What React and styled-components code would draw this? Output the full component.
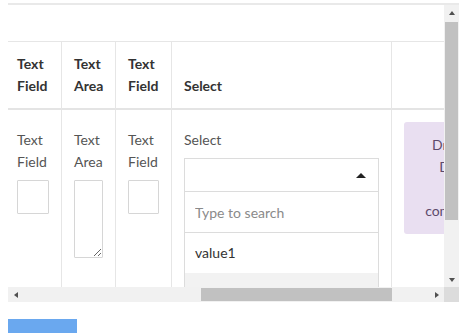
import React, { useLayoutEffect, useRef } from 'react';
import styled, { createGlobalStyle } from 'styled-components';

const HIDDEN = [120, 95, 93, 93];
const VISIBLE = [57, 54, 56, 220, 136];
const HIDDEN_WIDTH = HIDDEN.reduce((a, b) => a + b, 0);
const BAR = 15;
const VIEW_W = 436;
const VIEW_H = 282;
const SHEET_TOP = 36;
const HEAD_H = 1 + 68;
const BODY_H = 250;
const CONTENT_W = [...HIDDEN, ...VISIBLE].reduce((a, b) => a + b, 0);
const CONTENT_H = SHEET_TOP + HEAD_H + BODY_H;
const SCROLL_LEFT = HIDDEN_WIDTH + 3;

const V_TRACK = VIEW_H - 2 * BAR;
const H_TRACK = VIEW_W - 2 * BAR;
const V_THUMB = { start: 2, len: (V_TRACK * VIEW_H) / CONTENT_H - 2 };
const H_THUMB = { start: (H_TRACK * SCROLL_LEFT) / CONTENT_W, len: (H_TRACK * VIEW_W) / CONTENT_W };

const GlobalStyle = createGlobalStyle`
  html, body { margin: 0; padding: 0; background: #fff; }
  body {
    font-family: Lato, "Liberation Sans", sans-serif;
    font-size: 14px;
    line-height: 22px;
    color: #333;
  }
  * { box-sizing: border-box; }
`;

const Page = styled.div`
  padding: 3px 0 0 8px;
  width: 459px;
`;

const Frame = styled.div`
  display: grid;
  grid-template-columns: ${VIEW_W}px ${BAR}px;
  grid-template-rows: ${VIEW_H}px ${BAR}px;
  border-top: 2px solid #e9e9e9;
  background: #fff;
`;

const Viewport = styled.div`
  overflow: hidden;
  position: relative;
`;

const Sheet = styled.div`
  padding-top: ${SHEET_TOP}px;
  width: max-content;
`;

const Grid = styled.div`
  display: grid;
  grid-template-columns: ${[...HIDDEN, ...VISIBLE].map((w) => `${w}px`).join(' ')};
  border-top: 1px solid #e6e6e6;
`;

const HeadCell = styled.div`
  display: flex;
  align-items: flex-end;
  height: 68px;
  padding: 11px 12px;
  font-weight: 700;
  color: #333;
  border-bottom: 2px solid #e4e4e4;
  border-right: ${(p) => (p.$last ? 'none' : '1px solid #e6e6e6')};
`;

const BodyCell = styled.div`
  position: relative;
  height: ${BODY_H}px;
  padding: 12px;
  border-right: ${(p) => (p.$last ? 'none' : '1px solid #e6e6e6')};
`;

const FormGroup = styled.div`
  padding-top: 7px;
`;

const Label = styled.label`
  display: block;
  margin-bottom: 7px;
  color: #555;
  font-weight: 400;
`;

const Input = styled.input`
  display: block;
  width: 100%;
  height: 34px;
  border: 1px solid #d6d6d6;
  border-radius: 1px;
  background: #fff;
  padding: 4px;
  font: inherit;
`;

const TextArea = styled.textarea`
  display: block;
  width: 100%;
  height: 78px;
  border: 1px solid #d6d6d6;
  border-radius: 1px;
  background: #fff;
  resize: vertical;
  font: inherit;
  padding: 2px;
`;

const SelectWrap = styled.div`
  position: relative;
`;

const SelectControl = styled.div`
  position: relative;
  height: 34px;
  border: 1px solid #dcdcdc;
  background: #fff;

  &::after {
    content: '';
    position: absolute;
    right: 12px;
    top: 14px;
    border-style: solid;
    border-width: 0 5px 5px 5px;
    border-color: transparent transparent #222 transparent;
  }
`;

const Dropdown = styled.div`
  position: absolute;
  top: 100%;
  left: 0;
  right: 0;
  margin-top: -1px;
  border: 1px solid #dcdcdc;
  background: #fff;
  z-index: 2;
`;

const Search = styled.input`
  display: block;
  width: 100%;
  height: 41px;
  border: none;
  border-bottom: 1px solid #dcdcdc;
  padding: 10px;
  font: inherit;
  font-size: 14px;
  color: #333;
  outline: none;
  &::placeholder { color: #8a8a8a; }
`;

const Choice = styled.div`
  height: 40px;
  padding: 9px 10px;
  font-size: 14px;
  color: #333;
  background: ${(p) => (p.$highlighted ? '#f2f2f2' : '#fff')};
`;

const DropZone = styled.div`
  padding: 12px 20px;
  background: #e9dff1;
  color: #5c4a6b;
  text-align: center;
  border-radius: 3px;
`;

/* ---------- scrollbars ---------- */

const VBar = styled.div`
  display: flex;
  flex-direction: column;
  min-height: 0;
  background: #f1f1f1;
`;

const HBar = styled.div`
  display: flex;
  min-width: 0;
  background: #f1f1f1;
`;

const Corner = styled.div`
  background: #dcdcdc;
`;

const ArrowButton = styled.div`
  flex: 0 0 ${BAR}px;
  width: ${BAR}px;
  height: ${BAR}px;
  display: flex;
  align-items: center;
  justify-content: center;

  &::before {
    content: '';
    border-style: solid;
    ${(p) =>
      ({
        up: 'border-width: 0 3.5px 4px 3.5px; border-color: transparent transparent #505050 transparent;',
        down: 'border-width: 4px 3.5px 0 3.5px; border-color: #505050 transparent transparent transparent;',
        left: 'border-width: 3.5px 4px 3.5px 0; border-color: transparent #505050 transparent transparent;',
        right: 'border-width: 3.5px 0 3.5px 4px; border-color: transparent transparent transparent #505050;',
      })[p.$dir]}
  }
`;

const Track = styled.div`
  flex: 1 1 0;
  min-width: 0;
  min-height: 0;
  position: relative;
`;

const VThumb = styled.div`
  position: absolute;
  left: 1px;
  right: 1px;
  top: ${(p) => p.$start}px;
  height: ${(p) => p.$len}px;
  background: #c1c1c1;
`;

const HThumb = styled.div`
  position: absolute;
  top: 1px;
  bottom: 1px;
  left: ${(p) => p.$start}px;
  width: ${(p) => p.$len}px;
  background: #c1c1c1;
`;

const SubmitButton = styled.button`
  margin-top: 17px;
  padding: 8px 13px;
  border: none;
  border-radius: 0;
  background: #6aa8ef;
  color: #fff;
  font: inherit;
  font-size: 14px;
`;

const hiddenCols = [
  { head: 'Number', label: 'Number' },
  { head: 'Password', label: 'Password' },
  { head: 'Checkbox', label: 'Checkbox' },
  { head: 'Email', label: 'Email' },
];

export default function App() {
  const ref = useRef(null);

  useLayoutEffect(() => {
    const el = ref.current;
    if (!el) return;
    el.scrollLeft = SCROLL_LEFT;
    el.scrollTop = 0;
  }, []);

  return (
    <>
      <GlobalStyle />
      <Page>
        <Frame>
          <Viewport ref={ref}>
            <Sheet>
              <Grid>
                {hiddenCols.map((c) => (
                  <HeadCell key={c.head}>{c.head}</HeadCell>
                ))}
                <HeadCell>Text Field</HeadCell>
                <HeadCell>Text Area</HeadCell>
                <HeadCell>Text Field</HeadCell>
                <HeadCell>Select</HeadCell>
                <HeadCell $last />

                {hiddenCols.map((c) => (
                  <BodyCell key={c.head}>
                    <FormGroup>
                      <Label>{c.label}</Label>
                      <Input />
                    </FormGroup>
                  </BodyCell>
                ))}
                <BodyCell>
                  <FormGroup>
                    <Label>Text Field</Label>
                    <Input />
                  </FormGroup>
                </BodyCell>
                <BodyCell>
                  <FormGroup>
                    <Label>Text Area</Label>
                    <TextArea />
                  </FormGroup>
                </BodyCell>
                <BodyCell>
                  <FormGroup>
                    <Label>Text Field</Label>
                    <Input />
                  </FormGroup>
                </BodyCell>
                <BodyCell>
                  <FormGroup>
                    <Label>Select</Label>
                    <SelectWrap>
                      <SelectControl />
                      <Dropdown>
                        <Search placeholder="Type to search" />
                        <Choice>value1</Choice>
                        <Choice $highlighted>value2</Choice>
                        <Choice>value3</Choice>
                      </Dropdown>
                    </SelectWrap>
                  </FormGroup>
                </BodyCell>
                <BodyCell $last>
                  <DropZone>Drag and Drop a form component</DropZone>
                </BodyCell>
              </Grid>
            </Sheet>
          </Viewport>

          <VBar>
            <ArrowButton $dir="up" />
            <Track>
              <VThumb $start={V_THUMB.start} $len={V_THUMB.len} />
            </Track>
            <ArrowButton $dir="down" />
          </VBar>

          <HBar>
            <ArrowButton $dir="left" />
            <Track>
              <HThumb $start={H_THUMB.start} $len={H_THUMB.len} />
            </Track>
            <ArrowButton $dir="right" />
          </HBar>
          <Corner />
        </Frame>
        <SubmitButton>Submit</SubmitButton>
      </Page>
    </>
  );
}
